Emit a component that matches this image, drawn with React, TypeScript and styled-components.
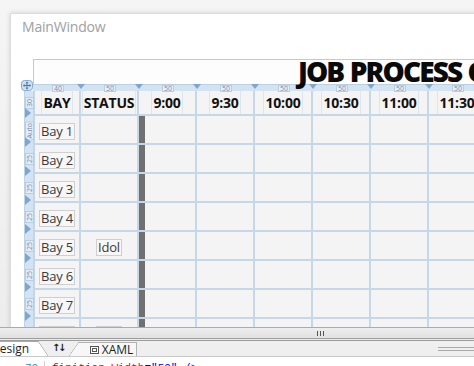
import React from "react";
import styled, { createGlobalStyle, css } from "styled-components";

const GlobalStyle = createGlobalStyle`
  html, body { margin: 0; padding: 0; width: 474px; height: 366px; overflow: hidden; background: #efefef; }
  * { box-sizing: border-box; }
`;

const Page = styled.div`
  width: 474px;
  height: 366px;
  overflow: hidden;
  display: flex;
  flex-direction: column;
  font-family: "Open Sans", "Noto Sans", sans-serif;
  background: #efefef;
`;

const Designer = styled.div`
  flex: none;
  height: 328px;
  overflow: hidden;
  padding: 13px 0 0 10px;
  background: linear-gradient(#f5f5f5, #ededed);
  border-bottom: 1px solid #ababab;
`;

const Window = styled.div`
  width: 620px;
  height: 420px;
  background: #ffffff;
  border: 1px solid #dcdcdc;
  box-shadow: 0 0 5px rgba(0, 0, 0, 0.14);
`;

const WindowTitle = styled.div`
  height: 45px;
  padding: 4px 0 0 11px;
  font-size: 14px;
  line-height: 18px;
  letter-spacing: -0.2px;
  color: #a0a0a0;
`;

const Surface = styled.div`
  display: flex;
  padding-left: 13px;
`;

const LeftCol = styled.div`
  flex: none;
  width: 9px;
  display: flex;
  flex-direction: column;
`;

const Corner = styled.div`
  position: relative;
  flex: none;
  height: 32px;
`;

const MoveHandle = styled.svg`
  position: absolute;
  left: -3px;
  top: 21px;
  z-index: 3;
`;

const LeftRuler = styled.div`
  display: flex;
  flex-direction: column;
  background: #d4e3f2;
  border-left: 1px solid #c0d3e6;
`;

const SideMark = styled.div<{ $h: number }>`
  position: relative;
  flex: none;
  height: ${(p) => p.$h}px;
  display: flex;
  align-items: center;
  justify-content: center;
  &::after {
    content: "";
    position: absolute;
    left: 0;
    bottom: -2px;
    border-left: 6px solid #7fa6cd;
    border-top: 5px solid transparent;
    border-bottom: 5px solid transparent;
    z-index: 2;
  }
`;

const SideLabel = styled.span`
  writing-mode: vertical-rl;
  transform: rotate(180deg);
  font-size: 7px;
  line-height: 7px;
  color: #7090b2;
  background: #e4edf7;
  border: 1px solid #b7cde3;
  padding: 1px 0;
`;

const MainCol = styled.div`
  flex: none;
  width: 560px;
  display: flex;
  flex-direction: column;
`;

const TitleRow = styled.div`
  position: relative;
  z-index: 2;
  height: 25px;
  padding-left: 264px;
  background: #fdfdfd;
  border-top: 1px solid #c8c8c8;
  border-left: 1px solid #c8c8c8;
  white-space: nowrap;
  font-size: 28px;
  line-height: 23px;
  font-weight: 800;
  letter-spacing: -1.9px;
  word-spacing: 1px;
  color: #0a0a0a;
`;

const TopRuler = styled.div`
  height: 7px;
  display: flex;
  padding-left: 2px;
  background: #d4e3f2;
  border-top: 1px solid #bcd0e4;
`;

const RulerCell = styled.div<{ $w: number }>`
  position: relative;
  flex: none;
  width: ${(p) => p.$w}px;
  display: flex;
  align-items: center;
  justify-content: center;
  &::after {
    content: "";
    position: absolute;
    right: -4px;
    top: -1px;
    border-top: 5px solid #7fa6cd;
    border-left: 4.5px solid transparent;
    border-right: 4.5px solid transparent;
  }
`;

const RulerLabel = styled.span`
  font-size: 7px;
  line-height: 5px;
  color: #7090b2;
  background: #e7eff8;
  border: 1px solid #b9cee3;
  padding: 0 1px;
`;

const Grid = styled.div`
  display: grid;
  grid-template-columns: 46px 58px repeat(7, 58px);
  grid-template-rows: 25px repeat(8, 29px);
  border-left: 2px solid #c3d5e7;
  background: #f4f4f4;
`;

const Cell = styled.div<{ $splitter?: boolean }>`
  display: flex;
  align-items: center;
  justify-content: center;
  background: #f4f4f4;
  border-right: 2px solid #c6d7e8;
  border-bottom: 2px solid #c6d7e8;
  ${(p) =>
    p.$splitter &&
    css`
      box-shadow: inset 6px 0 0 #707070;
    `}
`;

const HeaderText = styled.span`
  align-self: stretch;
  display: flex;
  align-items: center;
  padding: 0 1px;
  border-left: 1px solid #e0e5ea;
  border-right: 1px solid #e0e5ea;
  font-size: 14px;
  font-weight: 700;
  letter-spacing: -0.2px;
  color: #111;
`;

const ItemLabel = styled.span`
  margin-top: 4px;
  font-size: 13px;
  line-height: 15px;
  letter-spacing: -0.2px;
  color: #3a3a3a;
  border: 1px solid #cfcfcf;
  background: #f7f7f7;
  padding: 0 1px;
`;

const ScrollStrip = styled.div`
  flex: none;
  height: 13px;
  display: flex;
  align-items: center;
  padding-left: 317px;
  background: linear-gradient(#eeeeee, #e1e1e1);
  border-bottom: 3px double #9d9d9d;
`;

const TabStrip = styled.div`
  flex: none;
  height: 16px;
  display: flex;
  align-items: flex-end;
  background: #efefef;
  border-bottom: 1px solid #c9c9c9;
`;

const DesignTab = styled.div`
  position: relative;
  flex: none;
  width: 51px;
  height: 15px;
  margin-left: -13px;
  padding-left: 4px;
  background: #ffffff;
  border-top: 1px solid #a9a9a9;
  font-size: 12px;
  line-height: 14px;
  color: #1e1e1e;
  &::after {
    content: "";
    position: absolute;
    right: -10px;
    top: -1px;
    width: 10px;
    height: 15px;
    background: linear-gradient(
      to top right,
      #ffffff calc(50% - 0.6px),
      #a9a9a9 50%,
      transparent calc(50% + 0.6px)
    );
  }
`;

const SortGlyph = styled.span`
  flex: none;
  margin: 0 0 2px 14px;
  font-family: "DejaVu Sans", sans-serif;
  font-size: 10px;
  line-height: 12px;
  font-weight: 700;
  letter-spacing: -2.5px;
  color: #222;
`;

const XamlTab = styled.div`
  position: relative;
  flex: none;
  width: 59px;
  height: 14px;
  margin-left: 14px;
  padding-left: 12px;
  display: flex;
  align-items: center;
  gap: 3px;
  background: #f7f7f7;
  border-top: 1px solid #b2b2b2;
  border-right: 1px solid #b2b2b2;
  font-size: 12px;
  line-height: 13px;
  color: #1e1e1e;
  &::before {
    content: "";
    position: absolute;
    left: -9px;
    top: -1px;
    width: 10px;
    height: 14px;
    background: linear-gradient(
      to top left,
      #f7f7f7 calc(50% - 0.6px),
      #b2b2b2 50%,
      transparent calc(50% + 0.6px)
    );
  }
`;

const StripLines = styled.div`
  margin-left: auto;
  align-self: center;
  width: 36px;
  height: 4px;
  border-top: 1px solid #a9a9a9;
  border-bottom: 1px solid #a9a9a9;
`;

const Code = styled.div`
  flex: 1;
  display: flex;
  background: #ffffff;
  font-family: "Liberation Mono", "DejaVu Sans Mono", monospace;
  font-size: 11px;
  line-height: 14px;
  padding-top: 4px;
  white-space: nowrap;
`;

const LineNo = styled.span`
  flex: none;
  width: 45px;
  padding-left: 25px;
  color: #2b91af;
  border-right: 1px solid #d0d0d0;
`;

const CodeText = styled.span`
  padding-left: 7px;
`;

const Tok = styled.span<{ $c: string }>`
  color: ${(p) => p.$c};
`;

const colWidths = [46, 58, 58, 58, 58, 58, 58, 58, 58];
const rulerLabels = ["40", "50", "50", "50", "50", "50", "50", "50", "50"];
const headers = ["BAY", "STATUS", "9:00", "9:30", "10:00", "10:30", "11:00", "11:30", "12:00"];
const bays = [
  { bay: "Bay 1", status: "" },
  { bay: "Bay 2", status: "" },
  { bay: "Bay 3", status: "" },
  { bay: "Bay 4", status: "" },
  { bay: "Bay 5", status: "Idol" },
  { bay: "Bay 6", status: "" },
  { bay: "Bay 7", status: "" },
  { bay: "Bay 8", status: "Idol" },
];
const sideRows = [
  { h: 25, label: "30" },
  { h: 29, label: "Auto" },
  { h: 29, label: "25" },
  { h: 29, label: "25" },
  { h: 29, label: "25" },
  { h: 29, label: "25" },
  { h: 29, label: "25" },
  { h: 29, label: "25" },
  { h: 29, label: "25" },
];

export default function App() {
  return (
    <Page>
      <GlobalStyle />
      <Designer>
        <Window>
          <WindowTitle>MainWindow</WindowTitle>
          <Surface>
            <LeftCol>
              <Corner>
                <MoveHandle width="12" height="11" viewBox="0 0 12 11">
                  <rect x="0.5" y="0.5" width="11" height="10" rx="3" fill="#cddff1" stroke="#88aad0" />
                  <path d="M6 2v7M2.5 5.5h7" stroke="#4f78a3" strokeWidth="1" />
                  <path d="M6 1.6l-1.4 1.6h2.8zM6 9.4l-1.4-1.6h2.8zM2 5.5l1.6-1.4v2.8zM10 5.5l-1.6-1.4v2.8z" fill="#4f78a3" />
                </MoveHandle>
              </Corner>
              <LeftRuler>
                {sideRows.map((r, i) => (
                  <SideMark key={i} $h={r.h}>
                    <SideLabel>{r.label}</SideLabel>
                  </SideMark>
                ))}
              </LeftRuler>
            </LeftCol>
            <MainCol>
              <TitleRow>JOB PROCESS CONTROL</TitleRow>
              <TopRuler>
                {colWidths.map((w, i) => (
                  <RulerCell key={i} $w={w}>
                    <RulerLabel>{rulerLabels[i]}</RulerLabel>
                  </RulerCell>
                ))}
              </TopRuler>
              <Grid>
                {headers.map((h) => (
                  <Cell key={h}>
                    <HeaderText>{h}</HeaderText>
                  </Cell>
                ))}
                {bays.map((b) => (
                  <React.Fragment key={b.bay}>
                    <Cell>
                      <ItemLabel>{b.bay}</ItemLabel>
                    </Cell>
                    <Cell>{b.status && <ItemLabel>{b.status}</ItemLabel>}</Cell>
                    {headers.slice(2).map((h, i) => (
                      <Cell key={h} $splitter={i === 0} />
                    ))}
                  </React.Fragment>
                ))}
              </Grid>
            </MainCol>
          </Surface>
        </Window>
      </Designer>
      <ScrollStrip>
        <svg width="7" height="5" viewBox="0 0 7 5">
          <rect x="0" y="0" width="1" height="5" fill="#555" />
          <rect x="3" y="0" width="1" height="5" fill="#555" />
          <rect x="6" y="0" width="1" height="5" fill="#555" />
        </svg>
      </ScrollStrip>
      <TabStrip>
        <DesignTab>Design</DesignTab>
        <SortGlyph>↑↓</SortGlyph>
        <XamlTab>
          <svg width="9" height="8" viewBox="0 0 9 8">
            <rect x="0.5" y="0.5" width="8" height="7" fill="#fff" stroke="#555" />
            <rect x="2.5" y="2.5" width="4" height="3" fill="none" stroke="#555" />
          </svg>
          XAML
        </XamlTab>
        <StripLines />
      </TabStrip>
      <Code>
        <LineNo>70</LineNo>
        <CodeText>
          <Tok $c="#a31515">finition</Tok> <Tok $c="#ff0000">Width</Tok>
          <Tok $c="#0000ff">="50"</Tok> <Tok $c="#0000ff">/&gt;</Tok>
        </CodeText>
      </Code>
    </Page>
  );
}
